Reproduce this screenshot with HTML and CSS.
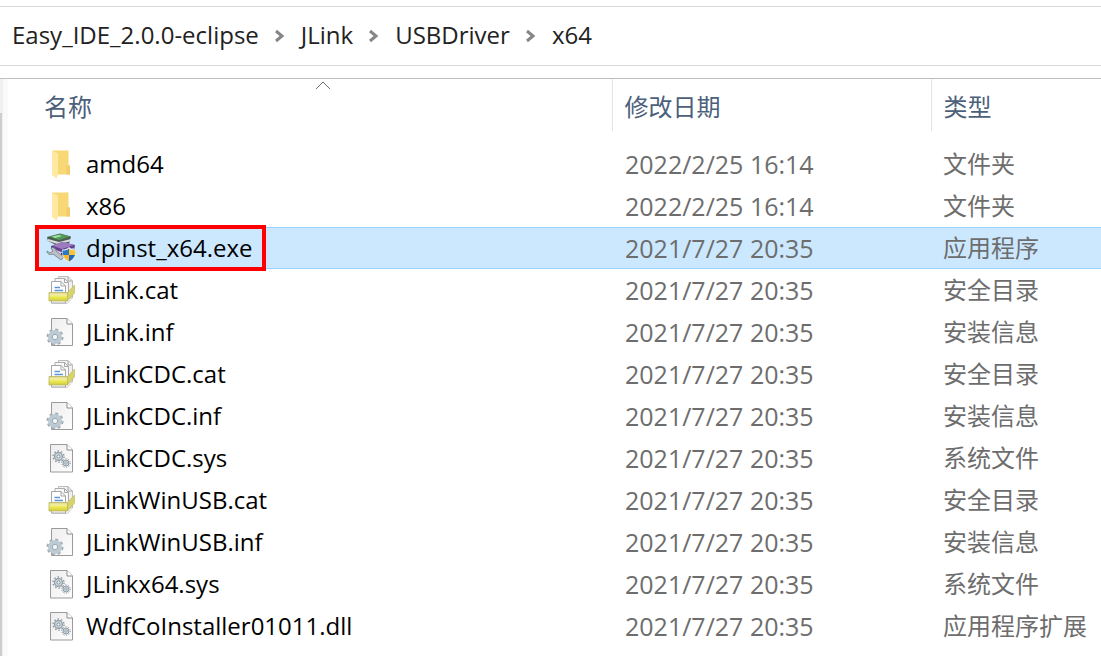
FILE: index.html
```html
<!DOCTYPE html>
<html lang="zh-CN">
<head>
  <meta charset="UTF-8" />
  <title>x64</title>
  <meta name="viewport" content="width=device-width, initial-scale=1" />
  <link rel="stylesheet" href="styles.css">
</head>
<body>
<svg class="sprite" aria-hidden="true">
  <defs>
    <linearGradient id="paper" x1="0" y1="0" x2="1" y2="1">
      <stop offset="0" stop-color="#eeeeef" />
      <stop offset="1" stop-color="#fdfdfd" />
    </linearGradient>
    <linearGradient id="band" x1="0" y1="0" x2="0" y2="1">
      <stop offset="0" stop-color="#d9d58c" />
      <stop offset="0.3" stop-color="#f3f0a0" />
      <stop offset="0.6" stop-color="#e9e548" />
      <stop offset="1" stop-color="#cfcb4a" />
    </linearGradient>
  </defs>
  <symbol id="folder" viewBox="0 0 30 30">
    <path d="M6 1.500h16.500v14.500l1.500 1v8.500H6z" fill="#f8d775" />
    <path d="M20.500 16.500H24v9h-3.500z" fill="#f1cd69" />
    <path d="M6 1.500l6 3v21l-1.500 4L6 26z" fill="#ffe9a2" />
  </symbol>
  <symbol id="gear" viewBox="0 0 20 20">
    <circle cx="10" cy="10" r="8" fill="none" stroke="#a3adb4" stroke-width="3" stroke-dasharray="3.200 3.083" />
    <circle cx="10" cy="10" r="5.500" fill="none" stroke="#bccad4" stroke-width="4.500" />
    <circle cx="10" cy="10" r="3" fill="#f3f6f8" stroke="#8f9da8" />
  </symbol>
  <symbol id="gear-outline" viewBox="0 0 20 20">
    <circle cx="10" cy="10" r="8.500" fill="none" stroke="#8b969d" stroke-width="2" stroke-dasharray="2.500 2.840" />
    <circle cx="10" cy="10" r="6" fill="#cfdde6" stroke="#8f9aa1" stroke-width="2" />
    <circle cx="10" cy="10" r="2.500" fill="#f3f6f8" stroke="#7e8a92" stroke-width="1.500" />
  </symbol>
  <symbol id="inf" viewBox="0 0 30 30">
    <path d="M5.500 1.500H21l5.500 5.500v21.500h-21z" fill="url(#paper)" stroke="#9a9a9a" />
    <path d="M21 1.500v5.500h5.500" fill="#fff" stroke="#8b8b8b" />
    <use href="#gear" x="0" y="11" width="18" height="18" />
  </symbol>
  <symbol id="sys" viewBox="0 0 30 30">
    <path d="M4.500 1.500H21l5.500 5.500v22h-22z" fill="url(#paper)" stroke="#9a9a9a" />
    <path d="M21 1.500v5.500h5.500" fill="#fff" stroke="#8b8b8b" />
    <use href="#gear-outline" x="6" y="7" width="13" height="13" />
    <use href="#gear-outline" x="15" y="15" width="10" height="10" />
  </symbol>
  <symbol id="cat" viewBox="0 0 30 30">
    <path d="M12.500 1.500h9.500l4.500 4.500v17h-14z" fill="#f1f1f1" stroke="#bdbdbd" />
    <path d="M9 3.500h9.500l4 4V24H9z" fill="#f8f8f8" stroke="#adadad" />
    <path d="M5.500 6.500H15l4.500 4.500v17h-14z" fill="#fff" stroke="#a6a6a6" />
    <path d="M15 6.500v4.500h4.500M18.500 3.500v4h4M22 1.500V6h4.500" fill="none" stroke="#a6a6a6" />
    <path d="M8.500 12.500H14M8.500 15.500H17" stroke="#5f93d3" stroke-width="1.300" />
    <path d="M21.500 17.500L28.500 10v8l-7 8z" fill="#d8d46c" stroke="#b9b561" stroke-width="0.600" />
    <path d="M3 17.500h18.500V26H3z" fill="url(#band)" stroke="#b9b561" stroke-width="0.800" />
    <path d="M5.500 28.500h15.500l4-4" fill="none" stroke="#c2c2c2" />
  </symbol>
  <symbol id="installer" viewBox="0 0 30 30">
    <path d="M1 4l13-3.500 11 3-2 7-12 2-9-4.500z" fill="#4d5d52" />
    <path d="M3 3.500L14 1l10 2.500-11 3.500z" fill="#4f9c58" />
    <path d="M6 3.500l7-1.500 3 1-7 2z" fill="#a9dfab" />
    <path d="M2 6l11 3 12-3v2l-12 3.500L2 8z" fill="#d8dddc" />
    <path d="M5 13l11-4 13 3-1 6-13 4-10-5z" fill="#65438e" />
    <path d="M6 12.500L17 9l11 3-12 4z" fill="#9c7bc1" />
    <path d="M5 15l10 4 13-4v3l-13 5-10-5z" fill="#ddd6e8" />
    <path d="M15 20l13-4v2l-13 4.500z" fill="#42365d" />
    <path d="M1 18c0 4 4 4 6 3l8 6 3-3-8-6c0-3-3-4-5-3l2 3-3 2z" fill="#b9c1c8" stroke="#707980" stroke-width="0.800" />
    <path d="M23 14c2 2 4 2.500 7 2.500 0 6-1 10-7 13-6-3-7-7-7-13 3 0 5-.5 7-2.500z" fill="#e5eef4" />
    <path d="M23 15.500V22h-6c-.5-2-.5-3.500-.5-4.500 3 0 5-.5 6.500-2z" fill="#2a78c7" />
    <path d="M23 15.500c1.500 1.500 3.500 2 6.500 2 0 1 0 2.500-.5 4.500h-6z" fill="#fbc23a" />
    <path d="M17 22h6v6.500c-3-1.500-5-3.500-6-6.500z" fill="#fbb52c" />
    <path d="M29 22c-1 3-3 5-6 6.500V22z" fill="#2469b4" />
  </symbol>
</svg>

<nav class="address-bar" aria-label="路径">
  <a href="#">Easy_IDE_2.0.0-eclipse</a>
  <svg class="chevron" viewBox="0 0 12 16"><path d="M2 3l6 5-6 5" /></svg>
  <a href="#">JLink</a>
  <svg class="chevron" viewBox="0 0 12 16"><path d="M2 3l6 5-6 5" /></svg>
  <a href="#">USBDriver</a>
  <svg class="chevron" viewBox="0 0 12 16"><path d="M2 3l6 5-6 5" /></svg>
  <a href="#">x64</a>
</nav>

<main class="content">
  <div class="side-scroll"><div class="thumb"></div></div>
  <div class="file-pane">
    <table class="files">
      <thead>
        <tr>
          <th class="col-name" aria-sort="ascending">
            <button type="button">名称</button>
            <svg class="sort-arrow" viewBox="0 0 16 9"><path d="M1 8l7-7 7 7" /></svg>
          </th>
          <th class="col-date"><button type="button">修改日期</button></th>
          <th class="col-type"><button type="button">类型</button></th>
        </tr>
      </thead>
      <tbody>
        <tr>
          <td><div class="name"><svg class="icon"><use href="#folder" /></svg>amd64</div></td>
          <td class="date">2022/2/25 16:14</td>
          <td>文件夹</td>
        </tr>
        <tr>
          <td><div class="name"><svg class="icon"><use href="#folder" /></svg>x86</div></td>
          <td class="date">2022/2/25 16:14</td>
          <td>文件夹</td>
        </tr>
        <tr class="selected">
          <td><div class="name marked"><svg class="icon"><use href="#installer" /></svg>dpinst_x64.exe</div></td>
          <td class="date">2021/7/27 20:35</td>
          <td>应用程序</td>
        </tr>
        <tr>
          <td><div class="name"><svg class="icon"><use href="#cat" /></svg>JLink.cat</div></td>
          <td class="date">2021/7/27 20:35</td>
          <td>安全目录</td>
        </tr>
        <tr>
          <td><div class="name"><svg class="icon"><use href="#inf" /></svg>JLink.inf</div></td>
          <td class="date">2021/7/27 20:35</td>
          <td>安装信息</td>
        </tr>
        <tr>
          <td><div class="name"><svg class="icon"><use href="#cat" /></svg>JLinkCDC.cat</div></td>
          <td class="date">2021/7/27 20:35</td>
          <td>安全目录</td>
        </tr>
        <tr>
          <td><div class="name"><svg class="icon"><use href="#inf" /></svg>JLinkCDC.inf</div></td>
          <td class="date">2021/7/27 20:35</td>
          <td>安装信息</td>
        </tr>
        <tr>
          <td><div class="name"><svg class="icon"><use href="#sys" /></svg>JLinkCDC.sys</div></td>
          <td class="date">2021/7/27 20:35</td>
          <td>系统文件</td>
        </tr>
        <tr>
          <td><div class="name"><svg class="icon"><use href="#cat" /></svg>JLinkWinUSB.cat</div></td>
          <td class="date">2021/7/27 20:35</td>
          <td>安全目录</td>
        </tr>
        <tr>
          <td><div class="name"><svg class="icon"><use href="#inf" /></svg>JLinkWinUSB.inf</div></td>
          <td class="date">2021/7/27 20:35</td>
          <td>安装信息</td>
        </tr>
        <tr>
          <td><div class="name"><svg class="icon"><use href="#sys" /></svg>JLinkx64.sys</div></td>
          <td class="date">2021/7/27 20:35</td>
          <td>系统文件</td>
        </tr>
        <tr>
          <td><div class="name"><svg class="icon"><use href="#sys" /></svg>WdfCoInstaller01011.dll</div></td>
          <td class="date">2021/7/27 20:35</td>
          <td>应用程序扩展</td>
        </tr>
      </tbody>
    </table>
  </div>
</main>
</body>
</html>
```
FILE: styles.css
```css
* {
  box-sizing: border-box;
}

body {
  margin: 0;
  padding-top: 6px;
  min-height: 100vh;
  display: flex;
  flex-direction: column;
  background: #fff;
  color: #111;
  font-family: "Open Sans", "Noto Sans CJK SC", sans-serif;
  font-size: 24px;
}

.sprite {
  position: absolute;
  width: 0;
  height: 0;
}

/* address bar */
.address-bar {
  display: flex;
  align-items: center;
  gap: 15px;
  height: 60px;
  padding-left: 12px;
  border-top: 1px solid #d9d9d9;
  border-bottom: 1px solid #d9d9d9;
  white-space: nowrap;
}

.address-bar a {
  padding-bottom: 4px;
  color: #222;
  text-decoration: none;
}

.chevron {
  width: 12px;
  height: 16px;
  fill: none;
  stroke: #868686;
  stroke-width: 3;
}

/* file list */
.content {
  display: flex;
  flex: 1;
  margin-top: 12px;
  border-top: 1px solid #bfbfbf;
}

.side-scroll {
  width: 8px;
  padding-top: 34px;
  display: flex;
  background: #f0f0f0;
  border-right: 5px solid #fafafa;
}

.thumb {
  width: 2px;
  background: #cdcdcd;
}

.file-pane {
  flex: 1;
  padding-left: 28px;
}

.files {
  width: 100%;
  table-layout: fixed;
  border-collapse: collapse;
}

.files th,
.files td {
  padding: 0;
  text-align: left;
  white-space: nowrap;
}

.files th {
  position: relative;
  height: 52px;
  font-weight: normal;
}

.files th + th {
  border-left: 1px solid #e3e3e3;
}

.files th button {
  width: 100%;
  padding: 0 0 0 12px;
  border: 0;
  background: none;
  color: #4c607a;
  font: inherit;
  text-align: left;
}

.files .col-name button {
  padding-left: 8px;
}

.col-date {
  width: 319px;
}

.col-type {
  width: 170px;
}

.sort-arrow {
  position: absolute;
  top: 2px;
  left: 50%;
  width: 16px;
  height: 9px;
  margin-left: -9px;
  fill: none;
  stroke: #6d6d6d;
}

.files tbody::before {
  content: "";
  display: block;
  height: 12px;
}

.files td {
  height: 42px;
  padding-left: 12px;
  color: #6d6d6d;
  line-height: 42px;
}

.files td:first-child {
  padding-left: 10px;
  color: #000;
}

.files .date {
  padding-left: 13px;
  font-size: 25px;
}

.name {
  position: relative;
  display: flex;
  align-items: center;
  gap: 10px;
  width: max-content;
}

.icon {
  width: 30px;
  height: 30px;
}

.selected {
  background: #cce8ff;
  box-shadow: inset 0 1px #99d1ff, inset 0 -1px #99d1ff;
}

/* red highlight around the file to run */
.marked::after {
  content: "";
  position: absolute;
  inset: -2px -14px -2px -11px;
  border: 4px solid #fe0000;
}
```
